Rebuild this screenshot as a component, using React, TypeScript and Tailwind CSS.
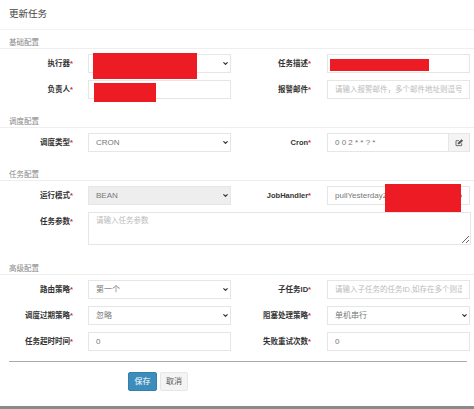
import { ChevronDown } from "lucide-react";

const inputBox = "block h-[19px] w-full rounded-none border border-[#e6e6e6] px-[7px] text-[8px] text-[#777] outline-none placeholder:text-[7.5px] placeholder:text-[#bbb]";

const Label = ({ text, width }: { text: string; width: string }) => (
	<label className={`${width} text-right text-[7.5px] font-bold leading-[19px] text-[#333]`}>
		{text}
		<span className="text-[#c9302c]">*</span>
	</label>
);

const Section = ({ title, className, children }: { title: string; className: string; children: React.ReactNode }) => (
	<section className={className}>
		<div className="ml-[9px] h-[10px] text-[7.5px] leading-[10px] text-[#888]">{title}</div>
		<div className="mb-[5px] border-t border-[#eee]" />
		<div className="flex flex-col gap-[7px]">{children}</div>
	</section>
);

const Row = ({ left, leftLabel, right, rightLabel }: { left: React.ReactNode; leftLabel: string; right: React.ReactNode; rightLabel: string }) => (
	<div className="flex items-start">
		<Label text={leftLabel} width="w-[73px]" />
		<div className="ml-[15px] w-[143px]">{left}</div>
		<Label text={rightLabel} width="w-[80px]" />
		<div className="ml-[16px] w-[143px]">{right}</div>
	</div>
);

const Select = ({ value, disabled }: { value: string; disabled?: boolean }) => (
	<div className="relative">
		<select disabled={disabled} defaultValue={value} className={`${inputBox} appearance-none ${disabled ? "bg-[#eee]" : "bg-white"}`}>
			<option>{value}</option>
		</select>
		<ChevronDown size={7} strokeWidth={4} className="absolute right-[2px] top-[6px] text-[#333]" />
	</div>
);

const Redaction = ({ className }: { className: string }) => <div className={`absolute bg-[#ed1c24] ${className}`} />;

export default function App() {
	return (
		<div className="relative h-[409px] w-[474px] overflow-hidden bg-white font-['Liberation_Sans','Noto_Sans_CJK_SC',sans-serif]">
			<h1 className="ml-[9px] h-[29px] text-[9.5px] font-normal leading-[28px] text-[#444]">更新任务</h1>
			<div className="border-t border-[#f4f4f4]" />

			<Section title="基础配置" className="mt-[8px]">
				<Row
					leftLabel="执行器"
					left={<Select value="" />}
					rightLabel="任务描述"
					right={<input className={inputBox} />}
				/>
				<Row
					leftLabel="负责人"
					left={<input className={inputBox} />}
					rightLabel="报警邮件"
					right={<input className={inputBox} placeholder="请输入报警邮件，多个邮件地址则逗号分隔" />}
				/>
			</Section>

			<Section title="调度配置" className="mt-[18px]">
				<Row
					leftLabel="调度类型"
					left={<Select value="CRON" />}
					rightLabel="Cron"
					right={
						<div className="flex">
							<input className={inputBox} defaultValue="0 0 2 * * ? *" />
							<button className="flex h-[19px] w-[21px] shrink-0 items-center justify-center border border-l-0 border-[#e6e6e6] bg-[#f4f4f4] text-[#555]">
								<svg width="8" height="8" viewBox="0 0 24 24" fill="none" stroke="currentColor" strokeWidth="2.5">
									<path d="M20 13v7H3V5h9" />
									<path d="M9 15l1-4L20 2l3 3-9 9z" fill="currentColor" />
								</svg>
							</button>
						</div>
					}
				/>
			</Section>

			<Section title="任务配置" className="mt-[18px]">
				<Row
					leftLabel="运行模式"
					left={<Select value="BEAN" disabled />}
					rightLabel="JobHandler"
					right={<input className={inputBox} defaultValue="pullYesterdayZxxxxxxxxxxxxxxxxxxxw" />}
				/>
				<div className="flex items-start">
					<Label text="任务参数" width="w-[73px]" />
					<textarea
						className="ml-[15px] h-[33px] w-[383px] rounded-none border border-[#e6e6e6] px-[7px] py-[2px] text-[8px] text-[#777] outline-none placeholder:text-[7.5px] placeholder:text-[#bbb]"
						placeholder="请输入任务参数"
					/>
				</div>
			</Section>

			<Section title="高级配置" className="mt-[19px]">
				<Row
					leftLabel="路由策略"
					left={<Select value="第一个" />}
					rightLabel="子任务ID"
					right={<input className={inputBox} placeholder="请输入子任务的任务ID,如存在多个则逗号分隔" />}
				/>
				<Row
					leftLabel="调度过期策略"
					left={<Select value="忽略" />}
					rightLabel="阻塞处理策略"
					right={<Select value="单机串行" />}
				/>
				<Row
					leftLabel="任务超时时间"
					left={<input className={inputBox} defaultValue="0" />}
					rightLabel="失败重试次数"
					right={<input className={inputBox} defaultValue="0" />}
				/>
			</Section>

			<div className="ml-[9px] mr-[7px] mt-[10px] border-t border-[#aaa]" />
			<div className="ml-[128px] mt-[10px] flex gap-[3px]">
				<button className="h-[19px] w-[29px] rounded-[2px] border border-[#367fa9] bg-[#3c8dbc] text-[8px] text-white">保存</button>
				<button className="h-[19px] w-[28px] rounded-[2px] border border-[#e6e6e6] bg-[#f4f4f4] text-[8px] text-[#555]">取消</button>
			</div>

			<div className="absolute inset-x-0 bottom-0 h-[3px] bg-[#8a8a8a]" />

			<Redaction className="left-[93px] top-[53px] h-[26px] w-[104px]" />
			<Redaction className="left-[94px] top-[83px] h-[19px] w-[62px]" />
			<Redaction className="left-[330px] top-[59px] h-[12px] w-[99px]" />
			<Redaction className="left-[385px] top-[184px] h-[28px] w-[76px]" />
		</div>
	);
}
